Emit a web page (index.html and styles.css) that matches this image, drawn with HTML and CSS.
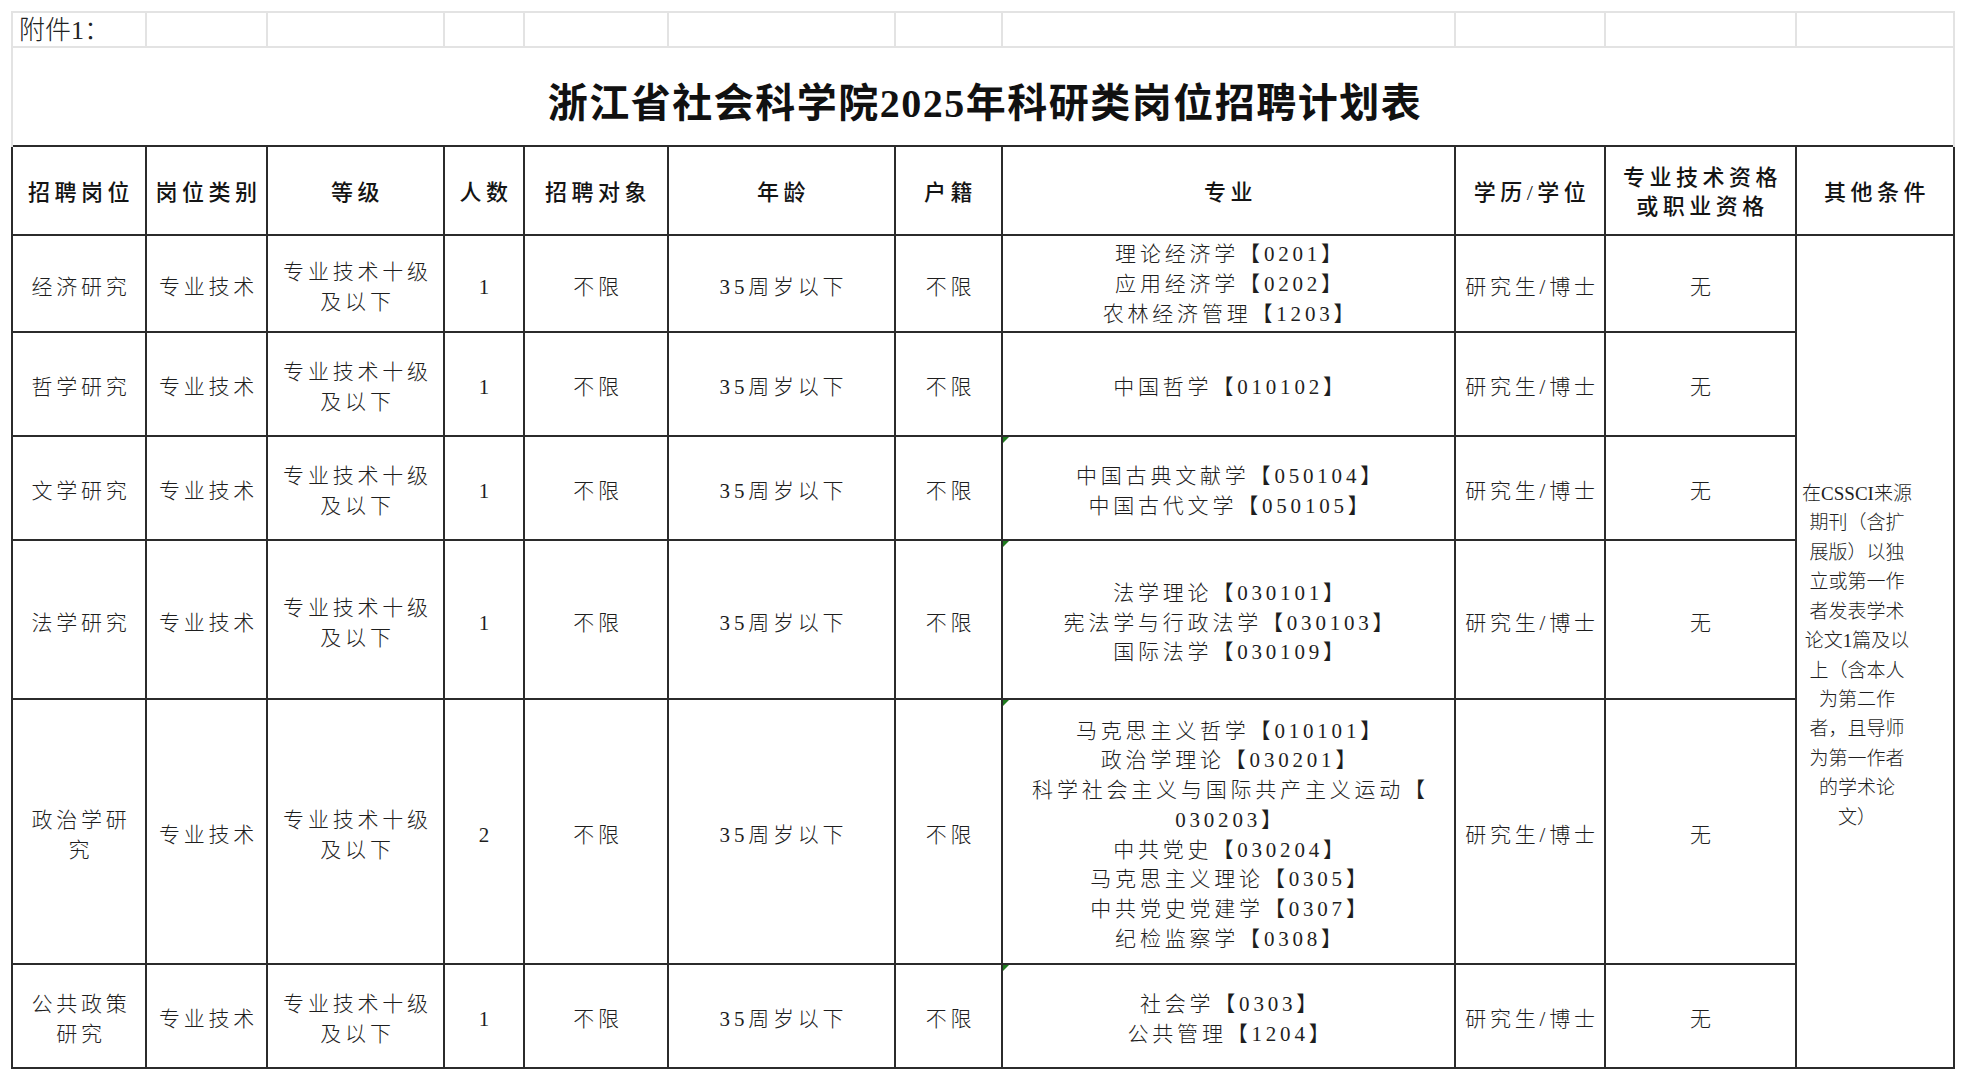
FILE: index.html
```html
<!DOCTYPE html>
<html lang="zh-CN">
<head>
<meta charset="utf-8">
<title>浙江省社会科学院2025年科研类岗位招聘计划表</title>
<link rel="stylesheet" href="styles.css">
</head>
<body>
<table class="sheet">
  <colgroup>
    <col class="c1"><col class="c2"><col class="c3"><col class="c4"><col class="c5"><col class="c6"><col class="c7"><col class="c8"><col class="c9"><col class="c10"><col class="c11">
  </colgroup>
  <tr class="r-note">
    <td class="note">附件1：</td><td></td><td></td><td></td><td></td><td></td><td></td><td></td><td></td><td></td><td></td>
  </tr>
  <tr class="r-title">
    <td class="title" colspan="11">浙江省社会科学院2025年科研类岗位招聘计划表</td>
  </tr>
  <tr class="r-head">
    <th>招聘岗位</th>
    <th>岗位类别</th>
    <th>等级</th>
    <th>人数</th>
    <th>招聘对象</th>
    <th>年龄</th>
    <th>户籍</th>
    <th>专业</th>
    <th>学历/学位</th>
    <th>专业技术资格<br>或职业资格</th>
    <th>其他条件</th>
  </tr>
  <tr class="row r1">
    <td>经济研究</td>
    <td>专业技术</td>
    <td>专业技术十级<br>及以下</td>
    <td>1</td>
    <td>不限</td>
    <td>35周岁以下</td>
    <td>不限</td>
    <td class="tight">理论经济学【0201】<br>应用经济学【0202】<br>农林经济管理【1203】</td>
    <td>研究生/博士</td>
    <td>无</td>
    <td class="other" rowspan="6">在CSSCI来源<br>期刊（含扩<br>展版）以独<br>立或第一作<br>者发表学术<br>论文1篇及以<br>上（含本人<br>为第二作<br>者，且导师<br>为第一作者<br>的学术论<br>文）</td>
  </tr>
  <tr class="row r2">
    <td>哲学研究</td>
    <td>专业技术</td>
    <td>专业技术十级<br>及以下</td>
    <td>1</td>
    <td>不限</td>
    <td>35周岁以下</td>
    <td>不限</td>
    <td>中国哲学【010102】</td>
    <td>研究生/博士</td>
    <td>无</td>
  </tr>
  <tr class="row r3">
    <td>文学研究</td>
    <td>专业技术</td>
    <td>专业技术十级<br>及以下</td>
    <td>1</td>
    <td>不限</td>
    <td>35周岁以下</td>
    <td>不限</td>
    <td class="flag">中国古典文献学【050104】<br>中国古代文学【050105】</td>
    <td>研究生/博士</td>
    <td>无</td>
  </tr>
  <tr class="row r4">
    <td>法学研究</td>
    <td>专业技术</td>
    <td>专业技术十级<br>及以下</td>
    <td>1</td>
    <td>不限</td>
    <td>35周岁以下</td>
    <td>不限</td>
    <td class="flag">法学理论【030101】<br>宪法学与行政法学【030103】<br>国际法学【030109】</td>
    <td>研究生/博士</td>
    <td>无</td>
  </tr>
  <tr class="row r5">
    <td>政治学研<br>究</td>
    <td>专业技术</td>
    <td>专业技术十级<br>及以下</td>
    <td>2</td>
    <td>不限</td>
    <td>35周岁以下</td>
    <td>不限</td>
    <td class="flag">马克思主义哲学【010101】<br>政治学理论【030201】<br>科学社会主义与国际共产主义运动【<br>030203】<br>中共党史【030204】<br>马克思主义理论【0305】<br>中共党史党建学【0307】<br>纪检监察学【0308】</td>
    <td>研究生/博士</td>
    <td>无</td>
  </tr>
  <tr class="row r6">
    <td>公共政策<br>研究</td>
    <td>专业技术</td>
    <td>专业技术十级<br>及以下</td>
    <td>1</td>
    <td>不限</td>
    <td>35周岁以下</td>
    <td>不限</td>
    <td class="flag">社会学【0303】<br>公共管理【1204】</td>
    <td>研究生/博士</td>
    <td>无</td>
  </tr>
</table>
</body>
</html>
```

FILE: styles.css
```css
html, body {
  margin: 0;
  padding: 0;
  background: #ffffff;
}

body {
  font-family: "Liberation Serif", "Noto Sans CJK SC", serif;
  color: #1e1e1e;
}

.sheet {
  border-collapse: collapse;
  table-layout: fixed;
  width: 1944px;
  margin: 11px 0 0 11px;
}

.c1 { width: 134px; }
.c2 { width: 121px; }
.c3 { width: 177px; }
.c4 { width: 80px; }
.c5 { width: 144px; }
.c6 { width: 227px; }
.c7 { width: 107px; }
.c8 { width: 453px; }
.c9 { width: 150px; }
.c10 { width: 191px; }
.c11 { width: 158px; }

.sheet td,
.sheet th {
  padding: 0 0 0 4px;
  text-align: center;
  vertical-align: middle;
  white-space: nowrap;
}

/* top light grid row */
.r-note { height: 35px; }
.r-note td {
  border: 2px solid #e3e3e3;
}
.sheet td.note {
  text-align: left;
  padding: 3px 0 0 6px;
  font-size: 26px;
  font-weight: 300;
  color: #222;
  line-height: 28px;
}

/* title row */
.r-title { height: 99px; }
.sheet td.title {
  border-left: 2px solid #e3e3e3;
  border-right: 2px solid #e3e3e3;
  border-top: 2px solid #e3e3e3;
  font-size: 40px;
  font-weight: 700;
  letter-spacing: 1.5px;
  color: #111;
  padding-top: 6px;
}

/* header */
.r-head { height: 89px; }
.r-head th {
  border: 2px solid #2b2b2b;
  font-size: 22px;
  font-weight: 500;
  letter-spacing: 4.5px;
  line-height: 29px;
  color: #141414;
  padding-top: 3px;
}

/* data rows */
.row td {
  border: 2px solid #2b2b2b;
  font-size: 21px;
  font-weight: 300;
  letter-spacing: 3.8px;
  line-height: 29.7px;
  padding-top: 8px;
}

.row td.tight {
  padding-top: 3px;
}

.r1 { height: 97px; }
.r2 { height: 104px; }
.r3 { height: 104px; }
.r4 { height: 159px; }
.r5 { height: 265px; }
.r6 { height: 104px; }

.row td.other {
  font-size: 19px;
  letter-spacing: 0;
  line-height: 29.4px;
  padding: 8px 36px 0 0;
  white-space: nowrap;
}

.row td.flag {
  position: relative;
}
.row td.flag::before {
  content: "";
  position: absolute;
  left: 0;
  top: 0;
  border-top: 6px solid #1f7a1f;
  border-right: 6px solid transparent;
}
```
